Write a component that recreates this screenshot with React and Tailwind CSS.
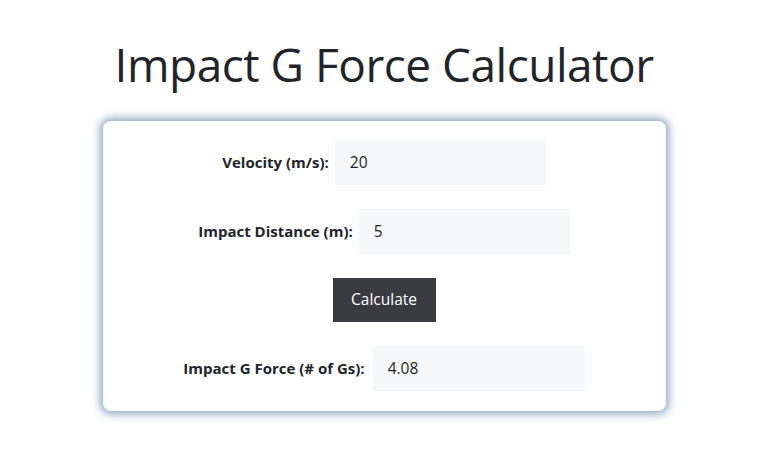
export default function App() {
  const rows = [
    { label: 'Velocity (m/s):', value: '20' },
    { label: 'Impact Distance (m):', value: '5' },
  ];

  return (
    <div
      className="min-h-screen bg-white flex flex-col items-center text-[#212529]"
      style={{ fontFamily: '"Open Sans", "Noto Sans", sans-serif' }}
    >
      <h1 className="mt-[34px] text-[46px] leading-[60px] font-normal tracking-[-0.5px]">
        Impact G Force Calculator
      </h1>

      <div className="mt-[27px] w-[563px] h-[290px] bg-white rounded-[8px] shadow-[0_0_8px_3px_rgba(95,130,170,0.7)] py-[19px] flex flex-col items-center gap-[24px]">
        {rows.map((r) => (
          <div key={r.label} className="flex items-center gap-[6px]">
            <label className="text-[15px] font-bold">{r.label}</label>
            <div className="w-[211px] h-[45px] bg-[#f6f7f9] flex items-center pl-[15px] text-[15.5px]">
              {r.value}
            </div>
          </div>
        ))}

        <button className="w-[103px] h-[44px] bg-[#3a3b41] text-white text-[15.5px]">
          Calculate
        </button>

        <div className="flex items-center gap-[8px]">
          <label className="text-[15px] font-bold">Impact G Force (# of Gs):</label>
          <div className="w-[212px] h-[45px] bg-[#f6f7f9] flex items-center pl-[15px] text-[15.5px]">
            4.08
          </div>
        </div>
      </div>
    </div>
  );
}
